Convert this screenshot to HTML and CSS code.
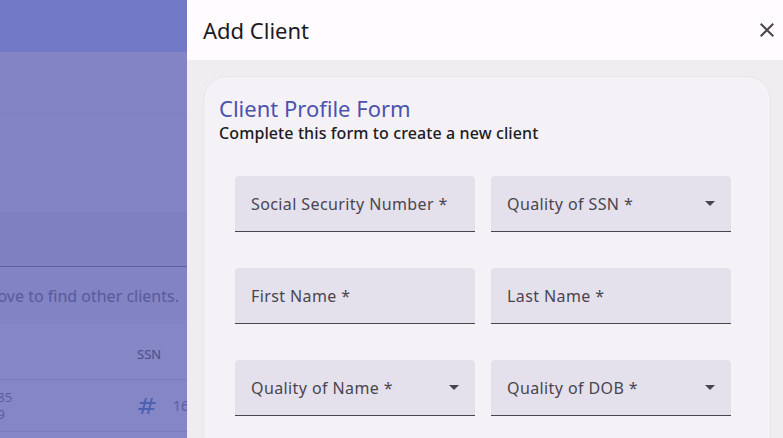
FILE: index.html
```html
<!DOCTYPE html>
<html>
<head>
<meta charset="utf-8">
<link rel="stylesheet" href="styles.css">
</head>
<body>
<div class="app">
  <div class="topbar"></div>
  <div class="band band-a"></div>
  <div class="band band-b"></div>
  <div class="band band-c"></div>
  <div class="hint"><div class="hint-box"><span class="hint-text">Search using the fields above to find other clients.</span></div></div>
  <div class="thead"><span class="th-ssn">SSN</span></div>
  <div class="trow">
    <div class="cell-dob"><span>Oct 1985</span><span>ID 4129</span></div>
    <div class="cell-ssn">
      <svg class="hash" width="24" height="24" viewBox="0 0 24 24"><path d="M20.5 10l.5-2h-4l1-4h-2l-1 4h-4l1-4h-2L9 8H5l-.5 2h4l-1 4h-4L3 16h4l-1 4h2l1-4h4l-1 4h2l1-4h4l.5-2h-4l1-4h4zm-7 4h-4l1-4h4l-1 4z" fill="#4d60b3"/></svg>
      <span class="num">16</span>
    </div>
  </div>
</div>

<div class="drawer">
  <div class="drawer-head">
    <span class="drawer-title">Add Client</span>
    <svg class="close" width="24" height="24" viewBox="0 0 24 24"><path d="M19 6.41 17.59 5 12 10.59 6.41 5 5 6.41 10.59 12 5 17.59 6.41 19 12 13.41 17.59 19 19 17.59 13.41 12z" fill="#49454f"/></svg>
  </div>
  <div class="drawer-body">
    <div class="card">
      <div class="card-title">Client Profile Form</div>
      <div class="card-sub">Complete this form to create a new client</div>
      <div class="grid">
        <div class="field"><span>Social Security Number *</span></div>
        <div class="field select"><span>Quality of SSN *</span><i class="caret"></i></div>
        <div class="field"><span>First Name *</span></div>
        <div class="field"><span>Last Name *</span></div>
        <div class="field select"><span>Quality of Name *</span><i class="caret"></i></div>
        <div class="field select"><span>Quality of DOB *</span><i class="caret"></i></div>
      </div>
    </div>
  </div>
</div>
</body>
</html>
```
FILE: styles.css
```css
* { box-sizing: border-box; }
html, body { margin: 0; padding: 0; width: 783px; height: 438px; overflow: hidden; }
body { font-family: "Noto Sans", sans-serif; background: #8586c6; }

.app { width: 783px; display: flex; flex-direction: column; }
.topbar { height: 52px; background: #7279c6; flex-shrink: 0; }
.band { background: #8384c4; flex-shrink: 0; }
.band-a { height: 63px; border-bottom: 1px solid #8081c1; }
.band-b { height: 97px; }
.band-c { height: 55px; background: #7f80c0; border-bottom: 1px solid #5d5fa3; }
.hint { height: 56px; background: #8283c3; flex-shrink: 0; display: flex; }
.hint-box {
  width: 179px; color: #575a9c; font-size: 16px;
  display: flex; align-items: center; justify-content: flex-end; padding-top: 2px;
  white-space: nowrap;
}
.hint-text { flex-shrink: 0; }
.thead { height: 57px; background: #8586c6; border-bottom: 1px solid #7a7bbd; position: relative; flex-shrink: 0; }
.th-ssn { position: absolute; left: 137px; top: 22px; font-size: 13px; color: #4b4d8e; }
.trow { height: 52px; background: #8586c6; border-bottom: 1px solid #7a7bbd; display: flex; align-items: center; flex-shrink: 0; }
.cell-dob {
  display: flex; flex-direction: column; margin-left: -42px; font-size: 13px;
  line-height: 17px; color: #5b5d9f; width: 177px; white-space: nowrap;
}
.cell-ssn { display: flex; align-items: center; gap: 14px; }
.hash { display: block; }
.num { font-size: 14px; color: #5b5d9f; }

.drawer {
  position: fixed; top: 0; left: 187px; width: 596px; height: 438px;
  background: #efedf0; display: flex; flex-direction: column; overflow: hidden;
}
.drawer-head {
  height: 60px; flex-shrink: 0; background: #fffbfe; display: flex; align-items: center;
  justify-content: space-between; padding: 0 4px 0 16px;
}
.drawer-title { font-size: 22px; color: #1c1b1f; }
.close { display: block; }
.drawer-body { padding: 16px 12px 0 16px; }
.card {
  background: #f5f2f7; border-radius: 24px; border: 1px solid #e7e4ea;
  padding: 16px 15px 40px 15px; height: 420px;
}
.card-title { font-size: 22px; line-height: 30px; color: #4c52b0; }
.card-sub { font-size: 16px; line-height: 20px; color: #1c1b1f; font-weight: 500; letter-spacing: 0.1px; }
.grid {
  display: grid; grid-template-columns: 240px 240px; column-gap: 16px; row-gap: 36px;
  padding: 33px 16px 0 16px;
}
.field {
  height: 56px; background: #e4e1ec; border-radius: 4px 4px 0 0;
  border-bottom: 1px solid #49454f; display: flex; align-items: center;
  justify-content: space-between; padding: 0 16px; color: #49454f; font-size: 16px;
  letter-spacing: 0.4px;
}
.caret {
  width: 0; height: 0; border-left: 5px solid transparent; border-right: 5px solid transparent;
  border-top: 5px solid #49454f;
}
```
